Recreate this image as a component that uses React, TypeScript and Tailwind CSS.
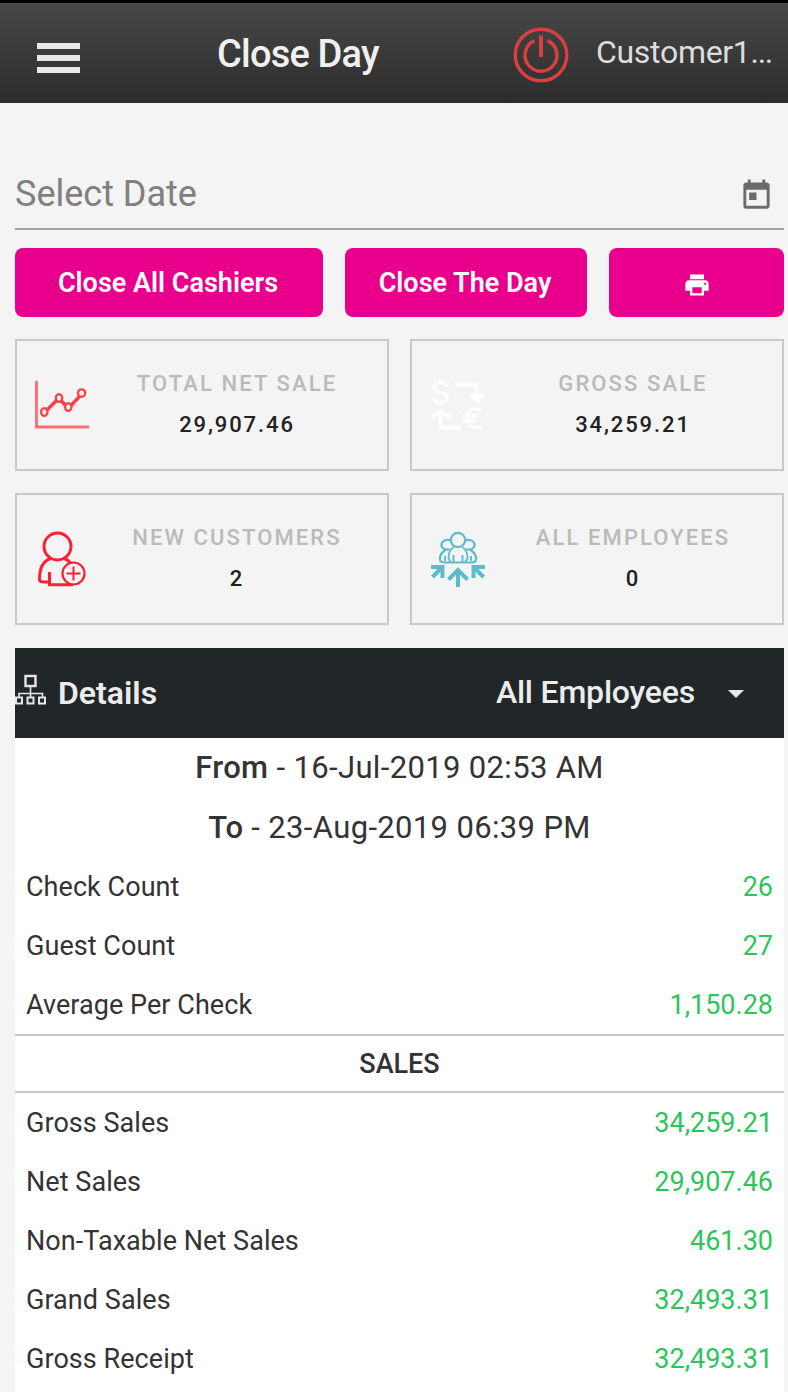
import type { ReactNode } from "react";
import { MdPrint, MdToday } from "react-icons/md";

type StatCardProps = {
  icon: ReactNode;
  label: string;
  value: string;
};

const counts = [
  { label: "Check Count", value: "26" },
  { label: "Guest Count", value: "27" },
  { label: "Average Per Check", value: "1,150.28" },
];

const sales = [
  { label: "Gross Sales", value: "34,259.21" },
  { label: "Net Sales", value: "29,907.46" },
  { label: "Non-Taxable Net Sales", value: "461.30" },
  { label: "Grand Sales", value: "32,493.31" },
  { label: "Gross Receipt", value: "32,493.31" },
];

function PowerIcon() {
  return (
    <svg viewBox="0 0 56 56" className="w-14 h-14" fill="none" stroke="#d9403f" strokeWidth="3.4">
      <circle cx="28" cy="28" r="25.8" />
      <path d="M21.5 13.6A16 16 0 1 0 34.5 13.6" />
      <path d="M28 8.5V30" strokeWidth="4" />
    </svg>
  );
}

function ChartIcon() {
  return (
    <svg viewBox="0 0 56 56" className="w-14 h-14" fill="none" stroke="#ff6b70">
      <path d="M3.5 4V50H56" strokeWidth="2.8" />
      <g stroke="#ff4046">
        <path d="M14 33L23.5 23.5M28.5 24L33 29M37.5 29L46.5 19.5" strokeWidth="3.6" />
        <ellipse cx="11.3" cy="35" rx="3.2" ry="3.8" strokeWidth="2.3" />
        <ellipse cx="26" cy="21" rx="3.2" ry="3.8" strokeWidth="2.3" />
        <ellipse cx="35.3" cy="30" rx="3.2" ry="3.8" strokeWidth="2.3" />
        <ellipse cx="48.6" cy="16.1" rx="3.6" ry="3.8" strokeWidth="2.3" />
      </g>
    </svg>
  );
}

function ExchangeIcon() {
  return (
    <svg viewBox="0 0 56 56" className="w-14 h-14 ml-0.5" fill="none" stroke="#ffffff" strokeWidth="3">
      <path d="M17 9.5C16 6.5 13.5 5.5 10.5 5.5C6.5 5.5 4 7.5 4 10.5C4 17 17 13.5 17 20.5C17 24 14 25.5 10.5 25.5C6.5 25.5 4 23.5 3 20.5M10.5 2V6M10.5 25V29" />
      <path d="M25 7.5H46.5V17" strokeWidth="3.8" />
      <path d="M39 17H55.5L47.2 26.5Z" fill="#ffffff" stroke="none" />
      <path d="M31 50.5H10.5V38" strokeWidth="3.8" />
      <path d="M2 40.5L10.5 34L20 40.5" strokeWidth="4" />
      <path d="M52 33.5C42 29 37 35 37 41C37 47.5 42 53.5 52 49.5M32.5 39H47M32.5 43.5H47" />
    </svg>
  );
}

function NewCustomerIcon() {
  return (
    <svg viewBox="0 0 56 56" className="w-14 h-14 -ml-0.5 mr-0.5" fill="none" stroke="#fb2036" strokeWidth="3">
      <circle cx="26.5" cy="15.5" r="13.5" />
      <path d="M19.5 27.5C12 30 8.5 37 8.5 48.5C8.5 50 10 51 13 51H17.5M18.5 41V53.7H42" />
      <path d="M33.5 27.5C36 28.5 38 30 39.5 32" />
      <circle cx="42.5" cy="42.5" r="11" strokeWidth="2.2" />
      <path d="M42.5 35.5V49.5M35.5 42.5H49.5" strokeWidth="2" />
    </svg>
  );
}

function TeamIcon() {
  return (
    <svg viewBox="0 0 56 56" className="w-14 h-14 ml-0.5" fill="none" stroke="#5bbdca" strokeWidth="2.2">
      <circle cx="28" cy="9" r="7.2" />
      <path d="M21 9.5C15 7.5 11 11 11.5 14.5C12 18 16 19.5 19.5 18M35 9.5C41 7.5 45 11 44.5 14.5C44 18 40 19.5 36.5 18" />
      <path d="M15 19.5C11 22 9.5 26 10 29C10.5 30.500 12.500 31.500 14 31.500H42C43.500 31.500 45.500 30.500 46 29C46.500 26 45 22 41 19.500" />
      <path d="M24 16C19.500 18 18.500 23 18.500 27.500L20.500 31M32 16C36.500 18 37.500 23 37.500 27.500L35.500 31M23.500 24V31M32.500 24V31M15 25V30M41 25V30" strokeWidth="1.900" />
      <path d="M28 56V40M18.500 48.500L28 39L37.500 48.500" strokeWidth="4" />
      <path d="M1 36H12.500V47M12 36.500L2.500 46" strokeWidth="4" />
      <path d="M55 36H43.500V47M44 36.500L53.500 46" strokeWidth="4" />
    </svg>
  );
}

function TreeIcon() {
  return (
    <svg viewBox="0 0 32 32" className="w-8 h-8 -mt-1.5" fill="none" stroke="#e6e6e6" strokeWidth="2">
      <rect x="10.500" y="2" width="10" height="10" strokeWidth="2.400" />
      <path d="M15.500 13V23M4 23V19.500H27.500V23" strokeWidth="1.600" />
      <rect x="1" y="23.500" width="6" height="6" />
      <rect x="12.500" y="23.500" width="6" height="6" />
      <rect x="24" y="23.500" width="6" height="6" />
    </svg>
  );
}

function StatCard({ icon, label, value }: StatCardProps) {
  return (
    <div className="flex items-center h-[132px] border-2 border-[#c9c9c9] pl-4">
      {icon}
      <div className="flex-1 flex flex-col items-center pr-[11px] pl-[9px] -mt-px text-center font-medium">
        <div className="text-[22px] leading-8 tracking-[2.1px] whitespace-nowrap text-[#bababa]">
          {label}
        </div>
        <div className="mt-[9px] text-[22px] leading-8 tracking-[1.9px] text-[#222222]">
          {value}
        </div>
      </div>
    </div>
  );
}

function Row({ label, value }: { label: string; value: string }) {
  return (
    <div className="flex items-center justify-between h-[59px] px-[11px] pt-0.5 text-[27px]">
      <span className="tracking-[0.05px] text-[#333333]">{label}</span>
      <span className="text-[#2dc45c]">{value}</span>
    </div>
  );
}

export default function App() {
  return (
    <div className="w-[788px] h-[1392px] overflow-hidden bg-[#f4f4f4] font-['Roboto',sans-serif]">
      {/* Header */}
      <header className="flex h-[103px] border-t-[3px] border-black bg-gradient-to-b from-[#484848] to-[#2b2c2b] text-[#f0f0f0]">
        <div className="w-[217px] pl-[37px] pt-10">
          <div className="flex flex-col gap-[6px] w-[43px]">
            <div className="h-[6px] bg-[#e8e8e8]"></div>
            <div className="h-[6px] bg-[#e8e8e8]"></div>
            <div className="h-[6px] bg-[#e8e8e8]"></div>
          </div>
        </div>
        <h1 className="w-[296px] pt-[27px] text-[38px] leading-[48px] font-medium tracking-[-0.8px]">
          Close Day
        </h1>
        <div className="w-[83px] pt-6">
          <PowerIcon />
        </div>
        <div className="pt-[25px] text-[32px] leading-[48px] tracking-[-0.3px] text-[#dddddd] whitespace-nowrap">
          Customer1<span className="tracking-[-1.3px]">...</span>
        </div>
      </header>

      <main className="pl-[15px] pr-1">
        {/* Date picker */}
        <div className="flex items-center justify-between mt-[52px] h-[75px] border-b-2 border-[#a3a3a3] pt-1 pr-2.5">
          <span className="text-[36px] text-[#808080]">Select Date</span>
          <MdToday className="w-[35px] h-[35px] mt-1 text-[#6b6b6b]" />
        </div>

        {/* Actions */}
        <div className="flex justify-between mt-[18px] text-[27px] font-semibold text-white">
          <button className="w-[308px] h-[69px] pr-0.5 pt-0.5 rounded-lg bg-[#e8008c]">
            Close All Cashiers
          </button>
          <button className="w-[242px] h-[69px] pr-0.5 pt-0.5 rounded-lg bg-[#e8008c]">
            Close The Day
          </button>
          <button className="flex items-center justify-center w-[175px] h-[69px] rounded-lg bg-[#e8008c]">
            <MdPrint className="w-7 h-7 mt-1" />
          </button>
        </div>

        {/* Stats */}
        <div className="grid grid-cols-2 gap-x-[21px] gap-y-[22px] mt-[22px]">
          <StatCard icon={<ChartIcon />} label="TOTAL NET SALE" value="29,907.46" />
          <StatCard icon={<ExchangeIcon />} label="GROSS SALE" value="34,259.21" />
          <StatCard icon={<NewCustomerIcon />} label="NEW CUSTOMERS" value="2" />
          <StatCard icon={<TeamIcon />} label="ALL EMPLOYEES" value="0" />
        </div>

        {/* Details */}
        <section className="mt-[23px] pb-2 bg-white">
          <div className="flex items-center h-[90px] bg-[#212728] font-medium text-[#ececec]">
            <TreeIcon />
            <span className="ml-[11px] text-[32px] font-semibold">Details</span>
            <span className="ml-auto -mt-0.5 text-[32px] tracking-[-0.2px]">All Employees</span>
            <svg viewBox="0 0 16 8" className="w-4 h-2 mt-0.5 ml-[33px] mr-10" fill="#e6e6e6">
              <path d="M0 0H16L8 8Z" />
            </svg>
          </div>
          <div className="h-[59px] leading-[59px] text-center text-[31px] tracking-[0.35px] text-[#333333]">
            <span className="font-medium">From</span> - 16-Jul-2019 02:53 AM
          </div>
          <div className="h-[60px] leading-[61px] text-center text-[31px] tracking-[0.35px] text-[#333333]">
            <span className="font-medium">To</span> - 23-Aug-2019 06:39 PM
          </div>
          {counts.map((row) => (
            <Row key={row.label} {...row} />
          ))}
          <div className="h-[59px] border-y-2 border-[#c6c6c6] leading-[57px] text-center text-[27px] font-medium text-[#333333]">
            SALES
          </div>
          {sales.map((row) => (
            <Row key={row.label} {...row} />
          ))}
        </section>
      </main>
    </div>
  );
}
